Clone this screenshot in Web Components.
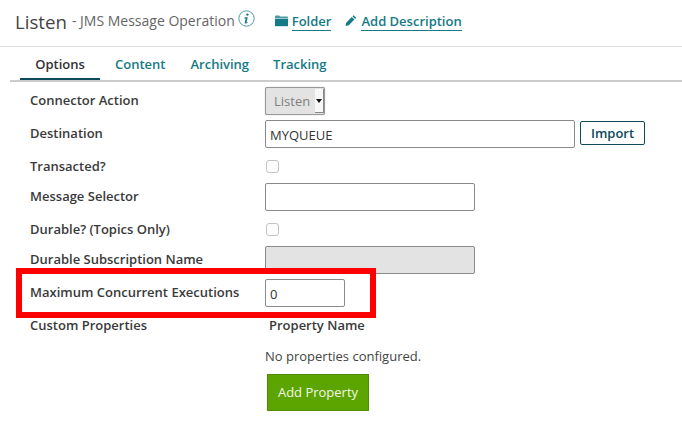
<!DOCTYPE html>
<html lang="en">
<head>
<meta charset="UTF-8">
<title>Listen</title>
<style>
  body { margin: 0; background: #fff; font-family: "Open Sans", sans-serif; color: #333; }
</style>
</head>
<body>
<script>
function el(name, css, html) {
  const template = document.createElement('template');
  template.innerHTML = `<style>${css}</style>${html}`;
  customElements.define(name, class extends HTMLElement {
    constructor() {
      super();
      this.attachShadow({ mode: 'open' }).appendChild(template.content.cloneNode(true));
    }
  });
}

el('op-header', `
  :host { display: flex; align-items: flex-start; height: 46px; border-bottom: 1px solid #ddd; box-sizing: content-box; padding-left: 15px; color: #444; }
  .title { font-size: 18.67px; line-height: 27px; margin-top: 8px; color: #444; }
  .sub { font-size: 14px; line-height: 20px; margin: 11px 0 0 5px; color: #666; }
  .info { margin: 10px 0 0 3px; width: 17px; height: 17px; }
  .link { display: flex; align-items: flex-start; margin-top: 13px; color: #147a85; font-size: 13px; font-weight: 600; }
  .link span { border-bottom: 1px solid #147a85; line-height: 16px; height: 16px; padding-bottom: 1px; }
  .link svg { margin: 1px 4px 0 0; }
  .folder { margin-left: 20px; }
  .desc { margin-left: 14px; }
`, `
  <div class="title">Listen</div>
  <div class="sub">- JMS Message Operation</div>
  <svg class="info" viewBox="0 0 17 17">
    <circle cx="8.5" cy="8.5" r="7.7" fill="none" stroke="#4a9aa3" stroke-width="1"/>
    <circle cx="9.4" cy="4.6" r="1.2" fill="#147a85"/>
    <path d="M6.6 7.3h3.2l-1.3 4.9c-.1.4.3.5 1.5-.3l-.1.7c-.8.7-1.4 1-2.2 1-.9 0-1.2-.5-1-1.3l1-3.9H6.5z" fill="#147a85"/>
  </svg>
  <div class="link folder">
    <svg width="13" height="13" viewBox="0 0 13 13"><path d="M0 2.2c0-.5.3-.8.8-.8h3.4l1 1.2H12c.5 0 1 .3 1 .8v.6H0z" fill="#4a9aa3"/><rect x="0" y="4.6" width="13" height="7.6" fill="#147a85"/></svg>
    <span>Folder</span>
  </div>
  <div class="link desc">
    <svg width="12" height="13" viewBox="0 0 12 13"><path d="M8.6 1.2l2.6 2.6-1.1 1.1-2.6-2.6zM6.8 3l2.6 2.6-5.6 5.7-3.3.7.7-3.3z" fill="#147a85"/></svg>
    <span>Add Description</span>
  </div>
`);

el('op-tabs', `
  :host { display: flex; height: 33px; margin-left: 10px; border-bottom: 2px solid #ccc; box-sizing: content-box; font-size: 13px; font-weight: 600; color: #147a85; padding-left: 10px; }
  div { line-height: 16px; padding-top: 9px; height: 22px; box-sizing: content-box; text-align: center; }
  .on { width: 80px; color: #333; border-bottom: 2px solid #0c4a5c; }
  .c { margin-left: 15px; }
  .a { margin-left: 25px; }
  .t { margin-left: 24px; }
`, `
  <div class="on">Options</div><div class="c">Content</div><div class="a">Archiving</div><div class="t">Tracking</div>
`);

el('form-row', `
  :host { display: flex; align-items: center; padding-left: 30px; font-size: 13px; color: #333; }
  .label { width: 235px; font-weight: 600; flex: none; color: #3a3a3a; margin-top: -2px; }
  .field { display: flex; align-items: center; flex: 1; }
`, `<div class="label"><slot name="label"></slot></div><div class="field"><slot></slot></div>`);

el('text-box', `
  :host { display: block; height: 28px; box-sizing: border-box; width: var(--w, 210px); border: 1px solid #8a8a8a; border-radius: 2px; background: var(--bg, #fff); font-size: 13px; line-height: 28px; padding-left: 4px; color: #333; }
`, `<slot></slot>`);

el('select-box', `
  :host { display: flex; height: 28px; width: 60px; box-sizing: border-box; border: 1px solid #999; border-radius: 2px; background: #e3e3e3; font-size: 13px; color: #808080; box-shadow: 0 0 1px #999; }
  .v { flex: 1; line-height: 27px; padding-left: 8px; }
  .b { width: 8px; margin: 1px 0; background: #f7f7f7; border-right: 1px solid #888; border-bottom: 1px solid #888; position: relative; }
  .b::after { content: ""; position: absolute; left: 1px; top: 10px; border: 3px solid transparent; border-top: 4px solid #111; border-bottom: 0; }
`, `<div class="v"><slot></slot></div><div class="b"></div>`);

el('check-box', `
  :host { display: block; width: 13px; height: 13px; margin-left: 1px; box-sizing: border-box; border: 1px solid #c4c4c4; border-radius: 3px; background: #fcfcfc; }
`, ``);

el('outline-button', `
  :host { display: block; margin: -2px 0 0 5px; height: 24px; width: 65px; box-sizing: border-box; border: 1px solid #0c4a5c; border-radius: 2px; font-size: 13px; font-weight: 600; color: #0c4a5c; line-height: 22px; text-align: center; }
`, `<slot></slot>`);

el('green-button', `
  :host { display: block; width: 102px; height: 37px; box-sizing: border-box; border: 1px solid #4f8c00; background: #5ca400; color: #f2f7e8; font-size: 13px; line-height: 35px; text-align: center; }
`, `<slot></slot>`);

el('red-box', `
  :host { position: absolute; left: 16px; top: 268px; width: 360px; height: 50px; box-sizing: border-box; border: 6px solid #ff0000; pointer-events: none; }
`, ``);

el('op-page', `
  :host { display: block; position: relative; width: 682px; height: 435px; overflow: hidden; }
  .form { display: flex; flex-direction: column; padding-top: 5px; }
  .sp5 { margin-top: 5px; }
  .name { margin-left: 4px; margin-top: -2px; font-weight: 600; color: #3a3a3a; }
  .none { padding-left: 265px; font-size: 13px; line-height: 18px; margin-top: 12px; color: #444; }
  .add { padding-left: 267px; margin-top: 9px; }
`, `
  <op-header></op-header>
  <op-tabs></op-tabs>
  <div class="form">
    <form-row><span slot="label">Connector Action</span><select-box>Listen</select-box></form-row>
    <form-row class="sp5"><span slot="label">Destination</span><text-box style="--w:310px">MYQUEUE</text-box><outline-button>Import</outline-button></form-row>
    <form-row style="height:13px;margin-top:12px"><span slot="label">Transacted?</span><check-box></check-box></form-row>
    <form-row style="margin-top:10px"><span slot="label">Message Selector</span><text-box></text-box></form-row>
    <form-row style="height:13px;margin-top:12px"><span slot="label">Durable? (Topics Only)</span><check-box></check-box></form-row>
    <form-row style="margin-top:10px"><span slot="label">Durable Subscription Name</span><text-box style="--bg:#e3e3e3"></text-box></form-row>
    <form-row class="sp5"><span slot="label">Maximum Concurrent Executions</span><text-box style="--w:80px">0</text-box></form-row>
    <form-row style="margin-top:10px;height:18px"><span slot="label">Custom Properties</span><span class="name">Property Name</span></form-row>
    <div class="none">No properties configured.</div>
    <div class="add"><green-button>Add Property</green-button></div>
  </div>
  <red-box></red-box>
`);
</script>
<op-page></op-page>
</body>
</html>
